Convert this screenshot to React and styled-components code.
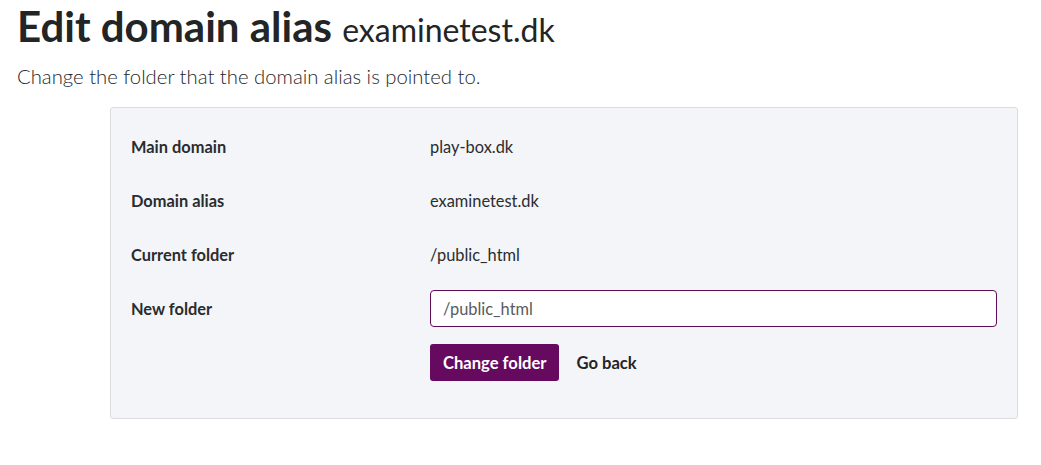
import React from "react";
import styled, { createGlobalStyle } from "styled-components";

const GlobalStyle = createGlobalStyle`
  body {
    margin: 0;
    background: #ffffff;
    font-family: Lato, "Open Sans", sans-serif;
    color: #222426;
  }
`;

const Page = styled.div`
  padding: 2px 17px 0;
`;

const Title = styled.h1`
  margin: 0;
  font-size: 42px;
  font-weight: 700;
  line-height: 48px;
  color: #222426;
`;

const TitleSub = styled.span`
  font-size: 32px;
  font-weight: 400;
`;

const Lead = styled.p`
  margin: 10px 0 0;
  font-size: 20.3px;
  line-height: 24px;
  font-weight: 300;
  color: #26282b;
`;

const Panel = styled.div`
  margin: 19px 0 0 93px;
  width: 908px;
  box-sizing: border-box;
  background: #f4f5f8;
  border: 1px solid #dcdde1;
  border-radius: 3px;
  padding: 20px 20px 37px;
  display: grid;
  grid-template-columns: 299px 1fr;
  grid-auto-rows: 37px;
  row-gap: 17px;
  align-items: center;
`;

const Label = styled.div`
  font-size: 16.4px;
  font-weight: 700;
  color: #2a2c2f;
`;

const Value = styled.div`
  font-size: 16.4px;
  color: #2a2c2f;
`;

const Input = styled.input`
  box-sizing: border-box;
  width: 100%;
  height: 37px;
  border: 1px solid #5d0d58;
  border-radius: 4px;
  padding: 0 13px 0 12px;
  font-family: inherit;
  font-size: 16.4px;
  color: #585b5f;
  background: #fff;
  outline: none;
`;

const Actions = styled.div`
  grid-column: 2;
  display: flex;
  align-items: center;
  gap: 17px;
  height: 37px;
`;

const Button = styled.button`
  height: 37px;
  border: none;
  border-radius: 3px;
  font-family: inherit;
  font-size: 16.6px;
  font-weight: 700;
  background: ${(p) => (p.$primary ? "#660a5f" : "transparent")};
  color: ${(p) => (p.$primary ? "#ffffff" : "#222426")};
  padding: ${(p) => (p.$primary ? "0 13px" : "0")};
  cursor: pointer;
`;

const rows = [
  ["Main domain", "play-box.dk"],
  ["Domain alias", "examinetest.dk"],
  ["Current folder", "/public_html"],
];

export default function App() {
  return (
    <>
      <GlobalStyle />
      <Page>
        <Title>
          Edit domain alias <TitleSub>examinetest.dk</TitleSub>
        </Title>
        <Lead>Change the folder that the domain alias is pointed to.</Lead>
        <Panel>
          {rows.map(([label, value]) => (
            <React.Fragment key={label}>
              <Label>{label}</Label>
              <Value>{value}</Value>
            </React.Fragment>
          ))}
          <Label>New folder</Label>
          <Input defaultValue="/public_html" />
          <Actions>
            <Button $primary>Change folder</Button>
            <Button>Go back</Button>
          </Actions>
        </Panel>
      </Page>
    </>
  );
}
